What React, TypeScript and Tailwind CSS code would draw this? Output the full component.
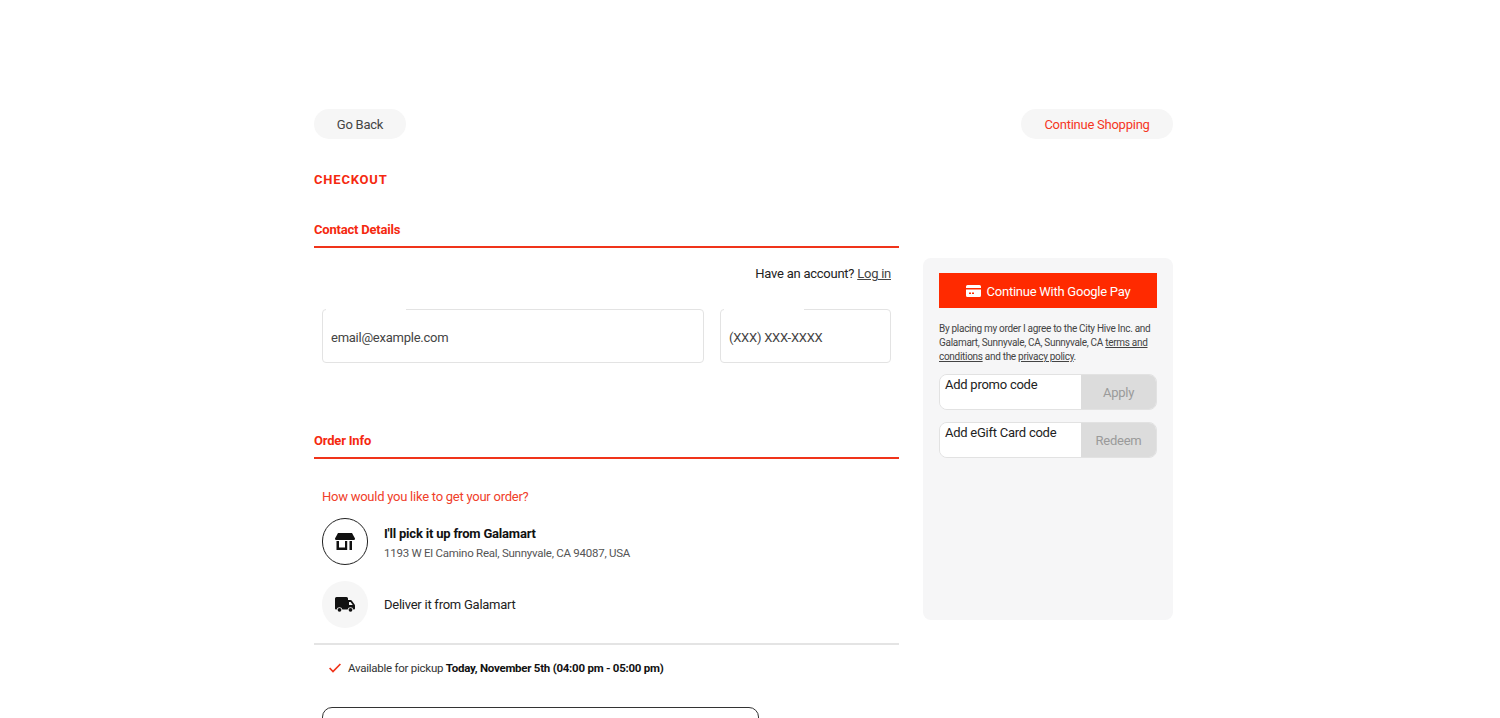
const font = "font-['Roboto',sans-serif]";

function SectionTitle({ children }: { children: React.ReactNode }) {
  return (
    <div className="border-b-2 border-[#f0341a] pb-[6px]">
      <h2 className="text-[13px] leading-[20px] font-bold tracking-[-0.2px] text-[#f5290f]">{children}</h2>
    </div>
  );
}

function ContactField({ value, className }: { value: string; className: string }) {
  return (
    <div className={`relative flex h-[54px] items-center rounded-[4px] border border-[#e3e3e3] bg-white px-[8px] pt-[4px] text-[13px] tracking-[-0.25px] text-[#444444] ${className}`}>
      {/* gap left by the floating label */}
      <span className="absolute top-[-1px] left-[3px] h-[2px] w-[80px] bg-white" />
      {value}
    </div>
  );
}

function CodeField({ label, action }: { label: string; action: string }) {
  return (
    <div className="flex h-[36px] overflow-hidden rounded-[8px] border border-[#e2e2e2] text-[13px] tracking-[-0.25px]">
      <div className="flex-1 bg-white px-[5px] pt-[1px] leading-[18px] text-[#222222]">{label}</div>
      <div className="flex w-[75px] items-center justify-center bg-[#dcdcdc] pt-[1px] text-[#9a9a9a]">{action}</div>
    </div>
  );
}

function StoreIcon() {
  return (
    <svg width="20" height="17" viewBox="0 0 20 17" fill="#111111">
      <path d="M3 0h14l3 5.500c0 1-.6 1.500-1.500 1.500h-17C.6 7 0 6.500 0 5.500z" />
      <path d="M1.500 8H4v6.500h6V8h2.200v9H1.500z" />
      <rect x="14.500" y="8" width="2.500" height="9" />
    </svg>
  );
}

function TruckIcon() {
  return (
    <svg width="20" height="15" viewBox="0 0 20 15" fill="#111111">
      <path d="M1.500 0h10A1.500 1.500 0 0 1 13 1.500V3h2.500a1.500 1.500 0 0 1 1.200.6L19.600 7.500a2 2 0 0 1 .4 1.200V11.500a1 1 0 0 1-1 1h-.6a3 3 0 0 0-5.800 0H7.400a3 3 0 0 0-5.800 0H1a1 1 0 0 1-1-1V1.500A1.500 1.500 0 0 1 1.500 0zM14 5v3h3.800l-2.200-3z" fillRule="evenodd" />
      <circle cx="4.500" cy="12.800" r="1.900" />
      <circle cx="15.500" cy="12.800" r="1.900" />
    </svg>
  );
}

function CardIcon() {
  return (
    <svg width="15" height="12" viewBox="0 0 15 12" fill="#ffffff">
      <path d="M1.500 0h12A1.500 1.500 0 0 1 15 1.500V3H0V1.500A1.500 1.500 0 0 1 1.500 0z" />
      <path fillRule="evenodd" d="M0 4.500h15v6A1.500 1.500 0 0 1 13.500 12h-12A1.500 1.500 0 0 1 0 10.500zM3 7.500v1.500h2V7.500zM6 7.500v1.500h2V7.500z" />
    </svg>
  );
}

export default function App() {
  return (
    <div className={`h-screen overflow-hidden bg-white ${font}`}>
      <div className="ml-[314px] w-[859px] pt-[109px]">
        <div className="flex items-center justify-between text-[13px] tracking-[-0.25px]">
          <button className="h-[30px] w-[92px] rounded-full bg-[#f6f6f6] pt-[1px] text-[#444444]">Go Back</button>
          <button className="h-[30px] w-[152px] rounded-full bg-[#f6f6f6] pt-[1px] text-[#f5361f]">Continue Shopping</button>
        </div>

        <h1 className="mt-[31px] text-[13px] leading-[20px] font-bold tracking-[0.8px] text-[#f5290f]">CHECKOUT</h1>

        <div className="mt-[30px] flex items-start gap-[24px]">
          <main className="w-[585px] shrink-0">
            <SectionTitle>Contact Details</SectionTitle>
            <p className="mt-[16px] pr-[8px] text-right text-[13px] leading-[20px] tracking-[-0.25px] text-[#222222]">
              Have an account? <a className="text-[#444444] underline">Log in</a>
            </p>
            <div className="mt-[25px] flex gap-[16px] px-[8px]">
              <ContactField value="email@example.com" className="w-[382px]" />
              <ContactField value="(XXX) XXX-XXXX" className="flex-1" />
            </div>

            <div className="mt-[68px]">
              <SectionTitle>Order Info</SectionTitle>
            </div>
            <div className="px-[8px]">
              <p className="mt-[28px] text-[13px] leading-[20px] tracking-[-0.25px] text-[#f0402a]">How would you like to get your order?</p>
              <div className="mt-[11px] flex items-center gap-[16px]">
                <div className="flex h-[47px] w-[46px] items-center justify-center rounded-full border border-[#222222]">
                  <StoreIcon />
                </div>
                <div className="pt-[2px]">
                  <div className="text-[13px] leading-[20px] font-bold tracking-[-0.2px] text-[#111111]">I'll pick it up from Galamart</div>
                  <div className="text-[11.5px] leading-[18px] tracking-[-0.25px] text-[#555555]">1193 W El Camino Real, Sunnyvale, CA 94087, USA</div>
                </div>
              </div>
              <div className="mt-[16px] flex items-center gap-[16px]">
                <div className="flex h-[47px] w-[46px] items-center justify-center rounded-full bg-[#f6f6f6]">
                  <TruckIcon />
                </div>
                <div className="text-[13px] tracking-[-0.25px] text-[#222222]">Deliver it from Galamart</div>
              </div>
            </div>
            <div className="mt-[15px] h-[2px] bg-[#e4e4e4]" />
            <div className="mt-[13px] flex items-center gap-[7px] pl-[15px] text-[11.5px] leading-[20px] tracking-[-0.25px] text-[#333333]">
              <svg width="12" height="10" viewBox="0 0 12 10" fill="none" stroke="#f0341a" strokeWidth="1.700">
                <path d="M.6 5l3.400 3.600L11.400 1" />
              </svg>
              <span>
                Available for pickup <b className="font-bold text-[#111111]">Today, November 5th (04:00 pm - 05:00 pm)</b>
              </span>
            </div>
            <div className="mt-[29px] ml-[8px] h-[60px] w-[437px] rounded-[10px] border border-[#333333]" />
          </main>

          <aside className="mt-[38px] h-[362px] w-[250px] rounded-[8px] bg-[#f6f6f7] p-[16px] pt-[15px]">
            <button className="flex h-[35px] w-full items-center justify-center gap-[6px] bg-[#ff2a00] text-[13px] tracking-[-0.25px] text-white">
              <CardIcon />
              <span className="pt-[2px]">Continue With Google Pay</span>
            </button>
            <p className="mt-[14px] text-[10px] leading-[14px] tracking-[-0.3px] text-[#444444]">
              By placing my order I agree to the City Hive Inc. and Galamart, Sunnyvale, CA, Sunnyvale, CA{" "}
              <a className="underline">terms and</a> <a className="underline">conditions</a> and the{" "}
              <a className="underline">privacy policy</a>.
            </p>
            <div className="mt-[10px] flex flex-col gap-[12px]">
              <CodeField label="Add promo code" action="Apply" />
              <CodeField label="Add eGift Card code" action="Redeem" />
            </div>
          </aside>
        </div>
      </div>
    </div>
  );
}
